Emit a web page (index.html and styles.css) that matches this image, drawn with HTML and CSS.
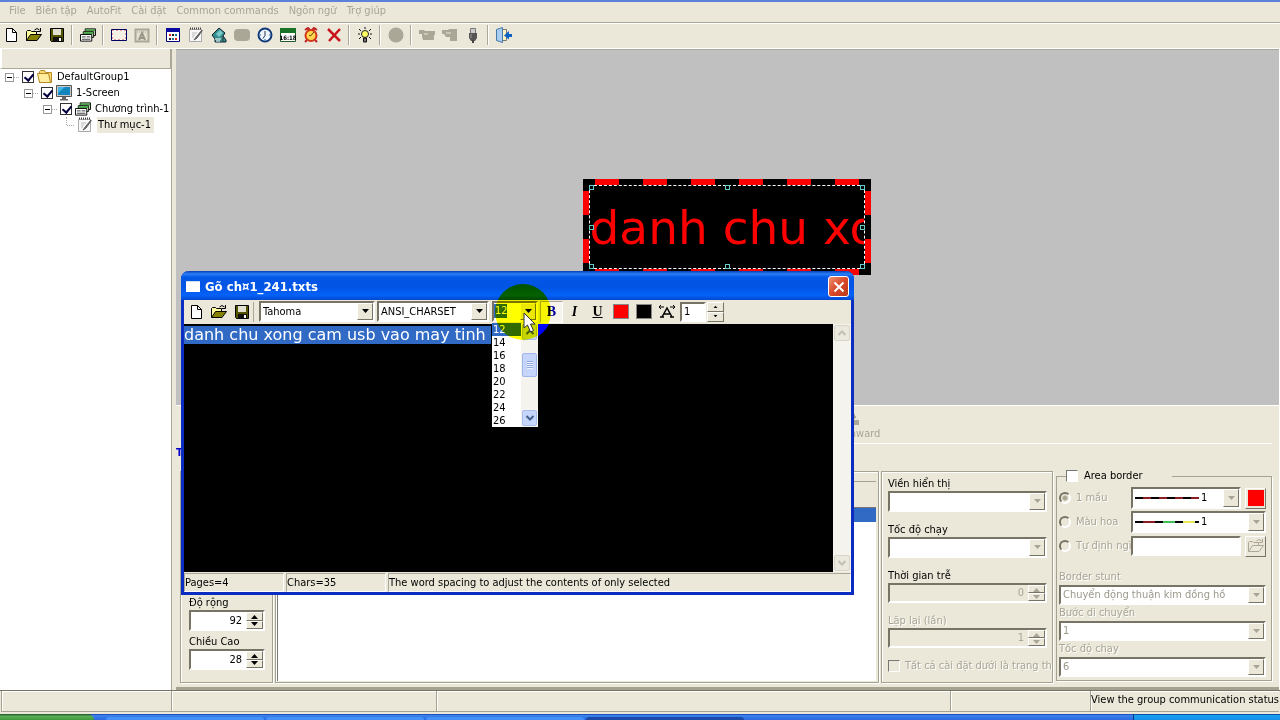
FILE: index.html
```html
<!DOCTYPE html>
<html lang="vi">
<head>
  <meta charset="UTF-8" />
  <meta name="viewport" content="width=device-width, initial-scale=1.0" />
  <title>LED Screen Editor</title>
  <link rel="stylesheet" href="styles.css">
</head>
<body>
  <!-- shared icons -->
  <svg width="0" height="0" class="sprite" aria-hidden="true">
    <symbol id="i-new" viewBox="0 0 16 16"><path d="M3.500 1.500h6l4 4v9h-10z" fill="#fff" stroke="#000"/><path d="M9.500 1.500v4h4" fill="none" stroke="#000"/></symbol>
    <symbol id="i-open" viewBox="0 0 16 16"><path d="M.5 13.500v-9l1-1h3l1 1h5v3" fill="#ffff9c" stroke="#000"/><path d="M.5 13.500l4-6h11l-4.500 6z" fill="#848200" stroke="#000"/><path d="M8.500 3q2.500-3 5 0M14.500 1v3.500h-3.500" fill="none" stroke="#000"/></symbol>
    <symbol id="i-save" viewBox="0 0 16 16"><path d="M1.500 1.500h13v13h-12l-1-1z" fill="#555500" stroke="#000"/><path d="M4 2h8v6H4z" fill="#e4e0d0"/><path d="M4 10h9v4.500H4z" fill="#111"/><path d="M10 11h2v3h-2z" fill="#fff"/></symbol>
    <symbol id="i-layers" viewBox="0 0 17 16"><path d="M5.500 1.500h11v7h-11z" fill="#d8f0c8" stroke="#000"/><path d="M6 2h10v2H6z" fill="#42a142"/><path d="M3.500 4.500h11v6h-11z" fill="#d8f0c8" stroke="#000"/><path d="M4 5h10v2H4z" fill="#42a142"/><path d="M.5 7.500h12v7H.5z" fill="#fff" stroke="#000"/><path d="M2 10h4M7 10h4M2 12.500h9" stroke="#333"/></symbol>
    <symbol id="i-note" viewBox="0 0 16 16"><path d="M1.500 2.500h12v12h-12z" fill="#f8f8f8" stroke="#aaa"/><path d="M2 1.500h11" stroke="#444" stroke-width="2" stroke-dasharray="1 1"/><path d="M4 6h5M4 8h3M4 10h2" stroke="#bbb"/><path d="M14 3L9 9l-3 4 3-2 5-7z" fill="#888" stroke="#555"/></symbol>
    <symbol id="i-folder" viewBox="0 0 16 16"><path d="M2.500 4.500v-2l1-1h4l1 2h6v10h-12z" fill="#f5d878" stroke="#b58a20"/><path d="M.5 4.500h11l2 9h-11z" fill="#ffec9e" stroke="#b58a20"/></symbol>
    <symbol id="i-screen" viewBox="0 0 16 16"><path d="M.5.500h15v11H.5z" fill="#c8c8c8" stroke="#555"/><path d="M2 2h12v8H2z" fill="#1285bd"/><path d="M2 2h7L2 8z" fill="#42b5e4"/><path d="M6 12h4v2h2v1.500H4V14h2z" fill="#666"/></symbol>
    <symbol id="i-down" viewBox="0 0 9 5"><path d="M1 0h7L4.500 4z" fill="currentColor"/></symbol>
    <symbol id="i-up" viewBox="0 0 9 5"><path d="M1 5h7L4.500 1z" fill="currentColor"/></symbol>
    <symbol id="i-chev-up" viewBox="0 0 10 8"><path d="M1.500 6L5 2.500 8.500 6" fill="none" stroke="currentColor" stroke-width="2"/></symbol>
    <symbol id="i-chev-down" viewBox="0 0 10 8"><path d="M1.500 2L5 5.500 8.500 2" fill="none" stroke="currentColor" stroke-width="2"/></symbol>
  </svg>

  <div class="app">
    <nav class="menubar">
      <a href="#">File</a><a href="#">Biên tập</a><a href="#">AutoFit</a><a href="#">Cài đặt</a><a href="#">Common commands</a><a href="#">Ngôn ngữ</a><a href="#">Trợ giúp</a>
    </nav>

    <div class="toolbar">
      <button aria-label="New"><svg><use href="#i-new"/></svg></button>
      <button aria-label="Open"><svg><use href="#i-open"/></svg></button>
      <button aria-label="Save"><svg><use href="#i-save"/></svg></button>
      <i class="sep"></i>
      <button aria-label="Program"><svg><use href="#i-layers"/></svg></button>
      <i class="sep"></i>
      <button aria-label="Area"><svg viewBox="0 0 16 16"><path d="M.5 2.500h15v11H.5z" fill="#f4f0e4" stroke="#000060"/><path d="M1.500 3.500h13v9h-13z" fill="none" stroke="#fff"/><path d="M1.500 3.500h13v9h-13z" fill="none" stroke="#c33" stroke-dasharray="1 3"/></svg></button>
      <button aria-label="Text"><svg viewBox="0 0 16 16"><path d="M1.500 2.500h13v12h-13z" fill="#e4e0d0" stroke="#aaa797" stroke-width="2"/><path d="M1 5h14" stroke="#aaa797" stroke-dasharray="1 1"/><path d="M5 13l3-7 3 7M6 11h4" fill="none" stroke="#999688" stroke-width="2"/></svg></button>
      <i class="sep"></i>
      <button aria-label="Table"><svg viewBox="0 0 16 16"><path d="M1.500 1.500h13v13h-13z" fill="#fff" stroke="#000080"/><path d="M1 1h14v4H1z" fill="#0a0aa0"/><path d="M4 7h2v2H4zM10 11h2v2h-2z" fill="#d22"/><path d="M7 7h2v2H7zM4 11h2v2H4z" fill="#222"/><path d="M10 7h2v2h-2zM7 11h2v2H7z" fill="#27a"/></svg></button>
      <button aria-label="Edit"><svg><use href="#i-note"/></svg></button>
      <button aria-label="Paint"><svg viewBox="0 0 16 16"><path d="M1 8l7-7 6 5-2 3 3 4v2H4v-3z" fill="#368d8d" stroke="#123"/><path d="M5 7l4-4 3 3-4 4z" fill="#79c9c7"/><path d="M4 12h6M5 14h4" stroke="#fff"/><path d="M12 9v5" stroke="#333"/></svg></button>
      <button aria-label="Record"><svg viewBox="0 0 16 16"><rect y="2" width="16" height="12" rx="4" fill="#aaa797"/></svg></button>
      <button aria-label="Clock"><svg viewBox="0 0 16 16"><circle cx="8" cy="8" r="6.500" fill="#eef6ff" stroke="#103a78" stroke-width="2"/><path d="M8 4v4.500l-2 3" fill="none" stroke="#234"/><path d="M3 8h1M12 8h1M8 12v1" stroke="#268"/></svg></button>
      <button aria-label="Time"><svg viewBox="0 0 16 16"><path d="M.5 1.500h15v13H.5z" fill="#fff" stroke="#1d5a26"/><path d="M0 1h16v5H0z" fill="#197325"/><text x="8" y="13" text-anchor="middle" class="clock-text">16:18</text></svg></button>
      <button aria-label="Alarm"><svg viewBox="0 0 16 16"><path d="M2 3l3-2 2 2M14 3l-3-2-2 2M4 13l-2 2M12 13l2 2" stroke="#b22" stroke-width="2" fill="#e52"/><circle cx="8" cy="8.500" r="5.500" fill="#ffd84c" stroke="#d2361c" stroke-width="2"/><path d="M11 5L7.500 9 6 8" fill="none" stroke="#631"/></svg></button>
      <button aria-label="Delete"><svg viewBox="0 0 16 16"><path d="M2 2l12 12M14 2L3 14" stroke="#c8141a" stroke-width="2.500"/></svg></button>
      <i class="sep"></i>
      <button aria-label="Light"><svg viewBox="0 0 16 16"><circle cx="8" cy="7" r="3.500" fill="#ffff62" stroke="#222"/><path d="M6.500 11h3v4h-3z" fill="#777" stroke="#111"/><path d="M8 0v2M1 7h2M13 7h2M2 2l2 2M14 2l-2 2M2 12l2-2M14 12l-2-2" stroke="#111"/></svg></button>
      <i class="sep"></i>
      <button aria-label="Stop"><svg viewBox="0 0 16 16"><circle cx="8" cy="8" r="7.500" fill="#aaa797"/></svg></button>
      <i class="sep"></i>
      <button aria-label="Send"><svg viewBox="0 0 16 16"><path d="M0 3h5l1 1h10v4h-1v5H4l-1-3V7H0z" fill="#aaa797"/><path d="M5 7h4" stroke="#e9e5d6"/></svg></button>
      <button aria-label="Receive"><svg viewBox="0 0 16 16"><path d="M0 3h6l1-1h8v12H8v-4H4L2 7H0z" fill="#aaa797"/><path d="M4 6h5" stroke="#e9e5d6"/></svg></button>
      <button aria-label="USB"><svg viewBox="0 0 16 16"><path d="M5.500 1.500h5v5h-5z" fill="#ccc" stroke="#777"/><path d="M4 6h8v5l-2 3H6l-2-3z" fill="#555"/><path d="M6 7v4" stroke="#999"/><path d="M8 13v3" stroke="#444" stroke-width="2"/></svg></button>
      <i class="sep"></i>
      <button aria-label="Exit"><svg viewBox="0 0 16 16"><path d="M5.500 2.500h5v11h-5z" fill="#fff3c0" stroke="#777"/><path d="M.5 2.500l6-2v15l-6-2z" fill="#a9cdf0" stroke="#4779aa"/><path d="M16 7h-3V4L8 8.500l5 4V10h3z" fill="#0c61c4"/></svg></button>
    </div>

    <div class="workspace">
      <aside class="side">
        <div class="side-head"></div>
        <ul class="tree">
          <li class="level-1"><i class="node"></i><input type="checkbox" id="t1" checked><svg><use href="#i-folder"/></svg><label for="t1">DefaultGroup1</label></li>
          <li class="level-2"><i class="node"></i><input type="checkbox" id="t2" checked><svg><use href="#i-screen"/></svg><label for="t2">1-Screen</label></li>
          <li class="level-3"><i class="node"></i><input type="checkbox" id="t3" checked><svg><use href="#i-layers"/></svg><label for="t3">Chương trình-1</label></li>
          <li class="level-4"><i class="elbow"></i><svg><use href="#i-note"/></svg><span class="current">Thư mục-1</span></li>
        </ul>
      </aside>

      <main class="main">
        <div class="canvas">
          <div class="led">
            <div class="led-area">
              <div class="led-text">danh chu xo</div>
              <i class="grip nw"></i><i class="grip n"></i><i class="grip ne"></i>
              <i class="grip w"></i><i class="grip e"></i>
              <i class="grip sw"></i><i class="grip s"></i><i class="grip se"></i>
            </div>
          </div>
        </div>

        <section class="props">
          <div class="props-bar">
            <button class="move-btn" disabled><svg viewBox="0 0 12 12"><path d="M1 6h10v5H1z" fill="#aaa797"/><path d="M6 0v5M4 3h4" stroke="#aaa797" stroke-width="2"/></svg>Downward</button>
          </div>
          <h2 class="props-title">T</h2>
          <div class="groups">
            <div class="group size-group">
              <label for="w">Độ rộng</label>
              <div class="spin"><input id="w" type="text" value="92"><span class="spin-btns"><button aria-label="Up"><svg><use href="#i-up"/></svg></button><button aria-label="Down"><svg><use href="#i-down"/></svg></button></span></div>
              <label for="h">Chiều Cao</label>
              <div class="spin"><input id="h" type="text" value="28"><span class="spin-btns"><button aria-label="Up"><svg><use href="#i-up"/></svg></button><button aria-label="Down"><svg><use href="#i-down"/></svg></button></span></div>
            </div>

            <div class="group list-group">
              <div class="list">
                <div class="list-head"></div>
                <div class="list-row"></div>
              </div>
            </div>

            <div class="group effect-group">
              <label for="fx">Viền hiển thị</label>
              <div class="combo off"><select id="fx" disabled><option></option></select><span class="arrow"><svg><use href="#i-down"/></svg></span></div>
              <label for="speed">Tốc độ chạy</label>
              <div class="combo off"><select id="speed" disabled><option></option></select><span class="arrow"><svg><use href="#i-down"/></svg></span></div>
              <label for="delay">Thời gian trễ</label>
              <div class="spin off"><input id="delay" type="text" value="0" disabled><span class="spin-btns"><button aria-label="Up" disabled><svg><use href="#i-up"/></svg></button><button aria-label="Down" disabled><svg><use href="#i-down"/></svg></button></span></div>
              <label for="repeat" class="dim">Lặp lại (lần)</label>
              <div class="spin off"><input id="repeat" type="text" value="1" disabled><span class="spin-btns"><button aria-label="Up" disabled><svg><use href="#i-up"/></svg></button><button aria-label="Down" disabled><svg><use href="#i-down"/></svg></button></span></div>
              <div class="check-row"><input type="checkbox" id="all" disabled><label for="all" class="dim">Tất cả cài đặt dưới là trạng thá</label></div>
            </div>

            <fieldset class="border-group">
              <legend><input type="checkbox" id="ab"><label for="ab">Area border</label></legend>
              <div class="radio-row">
                <input type="radio" name="b" id="b1" checked disabled><label for="b1" class="dim">1 mầu</label>
                <div class="combo off sample"><svg class="line" viewBox="0 0 64 2"><path d="M0 1h64" stroke="#000" stroke-width="2"/><path d="M8 1h56" stroke="#8e1c22" stroke-width="2" stroke-dasharray="8 8"/></svg><select aria-label="Line" disabled><option>1</option></select><span class="arrow"><svg><use href="#i-down"/></svg></span></div>
                <button class="swatch-btn" aria-label="Colour"><i></i></button>
              </div>
              <div class="radio-row">
                <input type="radio" name="b" id="b2" disabled><label for="b2" class="dim">Màu hoa</label>
                <div class="combo off sample"><svg class="line" viewBox="0 0 64 2"><path d="M0 1h64" stroke="#000" stroke-width="2"/><path d="M8 1h12" stroke="#8e1c22" stroke-width="2"/><path d="M28 1h12" stroke="#3fc050" stroke-width="2"/><path d="M48 1h12" stroke="#e8e850" stroke-width="2"/></svg><select aria-label="Pattern" disabled><option>1</option></select><span class="arrow"><svg><use href="#i-down"/></svg></span></div>
              </div>
              <div class="radio-row">
                <input type="radio" name="b" id="b3" disabled><label for="b3" class="dim">Tự định ngĩ</label>
                <input type="text" class="path" aria-label="File" disabled>
                <button class="swatch-btn" aria-label="Browse" disabled><svg viewBox="0 0 16 16"><path d="M.5 13.500v-9l1-1h3l1 1h5v3M.5 13.500l4-6h11l-4.500 6zM8.500 3q2.500-3 5 0M14.500 1v3.500h-3.500" fill="none" stroke="#aaa797"/></svg></button>
              </div>
              <div class="stack">
                <label for="stunt" class="dim">Border stunt</label>
                <div class="combo off"><select id="stunt" disabled><option>Chuyển động thuận kim đồng hồ</option></select><span class="arrow"><svg><use href="#i-down"/></svg></span></div>
                <label for="step" class="dim">Bước di chuyển</label>
                <div class="combo off"><select id="step" disabled><option>1</option></select><span class="arrow"><svg><use href="#i-down"/></svg></span></div>
                <label for="bspeed" class="dim">Tốc độ chạy</label>
                <div class="combo off"><select id="bspeed" disabled><option>6</option></select><span class="arrow"><svg><use href="#i-down"/></svg></span></div>
              </div>
            </fieldset>
          </div>
        </section>
      </main>
    </div>

    <footer class="statusbar">
      <span class="s1"></span><span class="s2"></span><span class="s3"></span><span class="s4"></span><span class="s5">View the group communication status</span>
    </footer>
    <div class="taskbar"><i class="start"></i><i class="task"></i><i class="task"></i><i class="task"></i><i class="task active"></i><i class="tray"></i></div>
  </div>

  <!-- text editor window -->
  <div class="window">
    <div class="titlebar">
      <i class="win-icon"></i><span>Gõ ch¤1_241.txts</span>
      <button class="close" aria-label="Close"><svg viewBox="0 0 12 12"><path d="M1.500 1.500l9 9M10.500 1.500l-9 9" stroke="#fff" stroke-width="2"/></svg></button>
    </div>
    <div class="win-tools">
      <button aria-label="New"><svg><use href="#i-new"/></svg></button>
      <button aria-label="Open"><svg><use href="#i-open"/></svg></button>
      <button aria-label="Save"><svg><use href="#i-save"/></svg></button>
      <i class="win-sep"></i>
      <div class="combo font-combo"><select aria-label="Font"><option>Tahoma</option></select><span class="arrow"><svg><use href="#i-down"/></svg></span></div>
      <div class="combo charset-combo"><select aria-label="Charset"><option>ANSI_CHARSET</option></select><span class="arrow"><svg><use href="#i-down"/></svg></span></div>
      <div class="size-box">
        <div class="combo size-combo"><input type="text" aria-label="Size" value="12"><span class="arrow"><svg><use href="#i-down"/></svg></span></div>
        <div class="size-list">
          <ul><li class="picked">12</li><li>14</li><li>16</li><li>18</li><li>20</li><li>22</li><li>24</li><li>26</li></ul>
          <div class="scroll blue">
            <button aria-label="Up"><svg><use href="#i-chev-up"/></svg></button>
            <i class="thumb"></i>
            <button aria-label="Down"><svg><use href="#i-chev-down"/></svg></button>
          </div>
        </div>
        <i class="halo"></i><i class="halo-edge"></i>
        <svg class="cursor" viewBox="0 0 13 21"><path d="M1 1v15l3.500-3 3 7 3-1.500-3-6.500h4.500z" fill="#fff" stroke="#333"/></svg>
      </div>
      <button class="fmt bold on">B</button>
      <button class="fmt italic">I</button>
      <button class="fmt under">U</button>
      <button aria-label="Text colour"><i class="chip red"></i></button>
      <button aria-label="Back colour"><i class="chip black"></i></button>
      <button aria-label="Spacing"><svg viewBox="0 0 16 16"><path d="M3 13l5-9 5 9M5 10h6M1 13h4M11 13h4" fill="none" stroke="#000" stroke-width="1.500"/><path d="M0 3h5M2 1L0 3l2 2M11 3h5M14 1l2 2-2 2" fill="none" stroke="#000"/></svg></button>
      <div class="gap-spin"><input type="text" aria-label="Spacing value" value="1"><span><button aria-label="Up"><svg><use href="#i-up"/></svg></button><button aria-label="Down"><svg><use href="#i-down"/></svg></button></span></div>
    </div>
    <div class="editor">
      <div class="page"><span class="selected">danh chu xong cam usb vao may tinh </span></div>
      <div class="scroll">
        <button aria-label="Up"><svg><use href="#i-chev-up"/></svg></button>
        <button aria-label="Down"><svg><use href="#i-chev-down"/></svg></button>
      </div>
    </div>
    <div class="win-status"><span class="w1">Pages=4</span><span class="w1">Chars=35</span><span class="w2">The word spacing to adjust the contents of only selected</span></div>
  </div>
</body>
</html>
```
FILE: styles.css
```css
* { box-sizing: border-box; margin: 0; padding: 0; }
body { font-family: "DejaVu Sans Condensed", "DejaVu Sans", sans-serif; font-size: 11px; line-height: 16px; color: #000; background: #ebe7d9; overflow: hidden; }
button, input, select { font: inherit; color: inherit; border: none; border-radius: 0; background: none; outline: none; }
a { color: inherit; text-decoration: none; }
ul { list-style: none; }
i { display: block; flex: none; }
svg { display: block; flex: none; width: 16px; height: 16px; }
.sprite { position: absolute; width: 0; height: 0; }

.app { display: flex; flex-direction: column; height: 100vh; }

/* menu and main toolbar */
.menubar { display: flex; gap: 10px; height: 23px; padding: 1px 9px; border-top: 2px solid #5f7fdc; border-bottom: 1px solid #aca899; color: #a8a596; }
.toolbar { display: flex; align-items: center; height: 26px; padding-bottom: 2px; border-top: 1px solid #fff; border-bottom: 1px solid #fff; }
.toolbar button, .win-tools > button { display: flex; align-items: center; justify-content: center; flex: none; width: 23px; height: 22px; }
.toolbar button { padding-right: 1px; }
.sep { width: 8px; height: 20px; background: linear-gradient(90deg, transparent 2px, #aca899 2px, #aca899 3px, #fff 3px, #fff 4px, transparent 4px); }
.clock-text { font-size: 6px; font-weight: bold; }

/* tree */
.workspace { display: flex; flex: 1; min-height: 0; }
.side { display: flex; flex-direction: column; flex: none; width: 172px; background: #fff; border-right: 1px solid #aca899; }
.side-head { height: 20px; background: #ebe7da; border-left: 2px solid #fff; border-bottom: 1px solid #aca899; border-right: 1px solid #aca899; }
.tree li { display: flex; align-items: center; height: 16px; white-space: nowrap; }
.tree .level-1 { padding-left: 5px; }
.tree .level-2 { padding-left: 24px; }
.tree .level-3 { padding-left: 43px; }
.tree .level-4 { padding-left: 66px; }
.tree svg { margin: 0 4px 0 3px; }
.node { width: 17px; height: 9px; background: linear-gradient(#000, #000) 2px 4px / 5px 1px no-repeat, linear-gradient(90deg, transparent 9px, #aaa 9px, #aaa 10px, transparent 10px, transparent 11px, #aaa 11px, #aaa 12px, transparent 12px, transparent 13px, #aaa 13px, #aaa 14px, transparent 14px) 0 4px / 17px 1px no-repeat; position: relative; }
.node::before { content: ""; position: absolute; inset: 0 8px 0 0; border: 1px solid #999; }
.elbow { width: 8px; height: 16px; border-left: 1px dotted #aaa; background: linear-gradient(90deg, #aaa 50%, transparent 50%) 0 8px / 2px 1px repeat-x; clip-path: inset(0 0 7px 0); }
.current { background: #ece8dc; padding: 0 3px 0 1px; }
input[type="checkbox"] { appearance: none; flex: none; width: 12px; height: 12px; background: #fff; border: 1px solid #fff; border-top-color: #777; border-left-color: #777; }
.tree input[type="checkbox"] { border: 1px solid #333; position: relative; }
.tree input:checked::after { content: ""; position: absolute; left: 3px; top: 0; width: 4px; height: 7px; border: solid #000040; border-width: 0 2px 2px 0; transform: rotate(40deg); }

/* preview */
.main { display: flex; flex-direction: column; flex: 1; min-width: 0; border-left: 4px solid #ebe7d9; border-right: 1px solid #fff; }
.canvas { display: flex; flex: 1; align-items: center; justify-content: center; padding: 0 2px 2px 0; background: #c0c0c0; border-top: 1px solid #aca899; }
.led { width: 288px; height: 96px; padding: 6px; background:
  repeating-linear-gradient(90deg, #f00 0 24px, #000 24px 48px) 12px 0 / 276px 6px no-repeat,
  repeating-linear-gradient(90deg, #f00 0 24px, #000 24px 48px) 12px 90px / 276px 6px no-repeat,
  repeating-linear-gradient(#f00 0 24px, #000 24px 48px) 0 12px / 6px 84px no-repeat,
  repeating-linear-gradient(#f00 0 24px, #000 24px 48px) 282px 12px / 6px 84px no-repeat, #000; }
.led-area { position: relative; height: 84px; border: 1px dashed #fff; background: #000; }
.led-text { height: 82px; overflow: hidden; white-space: nowrap; font-family: "DejaVu Sans", sans-serif; font-size: 47px; line-height: 84px; color: #f00; }
.grip { position: absolute; width: 5px; height: 5px; border: 1px solid #6cc; background: #000; }
.nw, .n, .ne { top: -1px; }
.w, .e { top: 39px; }
.sw, .s, .se { bottom: -1px; }
.nw, .w, .sw { left: -1px; }
.n, .s { left: 135px; }
.ne, .e, .se { right: -1px; }

/* properties */
.props { flex: none; padding: 0 7px 4px 4px; border-top: 1px solid #fff; border-bottom: 3px solid #a5a28f; }
.props-bar { height: 38px; border-bottom: 1px solid #fff; }
.move-btn { display: flex; flex-direction: column; align-items: center; margin-left: 648px; padding-top: 8px; color: #a8a596; }
.move-btn svg { width: 12px; height: 12px; }
.props-title { height: 27px; margin-left: -4px; line-height: 18px; font-size: 11px; color: #00c; }
.groups { display: flex; gap: 2px; height: 212px; }
.group, .border-group { border: 1px solid #a5a28f; box-shadow: 1px 1px 0 #fff, inset 1px 1px 0 #fff; min-width: 0; }
.size-group { display: flex; flex-direction: column; justify-content: flex-end; flex: none; width: 93px; padding: 0 7px 12px 8px; }
.group > label { line-height: 15px; }
.size-group .spin + label { margin-top: 3px; }
.list-group { flex: 1; padding: 9px 2px 0 1px; }
.list { height: 200px; background: #fff; border-left: 1px solid #777; border-top: 1px solid #a5a28f; }
.list-head { height: 26px; background: #ebe7d9; border-bottom: 1px solid #777; }
.list-row { height: 14px; background: #316ac5; }
.effect-group { display: flex; flex-direction: column; flex: none; width: 172px; padding: 4px 5px 0 6px; overflow: hidden; white-space: nowrap; }
.effect-group > div { margin-bottom: 10px; }
.check-row { display: flex; align-items: center; gap: 5px; }
.effect-group input[type="checkbox"] { background: #ebe7d9; }
.border-group { flex: none; width: 216px; height: 212px; margin: -2px 0 0 1px; padding: 4px 5px 0 2px; box-shadow: 1px 1px 0 #fff; }
.border-group legend { display: flex; align-items: center; gap: 6px; width: 106px; height: 14px; margin-left: 7px; }
.radio-row { display: flex; align-items: center; height: 22px; margin-bottom: 2px; }
.radio-row label { flex: none; width: 55px; margin-left: 5px; white-space: nowrap; }
.radio-row .path { flex: 1; min-width: 0; height: 20px; background: #fff; border: 2px solid; border-color: #777466 #fff #fff #777466; }
input[type="radio"] { appearance: none; flex: none; width: 12px; height: 12px; border-radius: 50%; border: 2px solid; border-color: #777466 #fff #fff #777466; }
input[type="radio"]:checked { background: radial-gradient(circle, #aaa797 2px, transparent 3px); }
.swatch-btn { display: flex; align-items: center; justify-content: center; flex: none; width: 21px; height: 21px; margin-left: 4px; border: 1px solid; border-color: #fff #777466 #777466 #fff; }
.swatch-btn i { width: 16px; height: 16px; background: #f00; }
.stack { padding-top: 10px; }
.stack .combo { height: 20px; }
.dim { color: #a8a596; text-shadow: 1px 1px 0 #fff; }

/* combo boxes and spinners */
.combo, .spin { display: flex; height: 21px; background: #fff; border: 2px solid; border-color: #777466 #fff #fff #777466; }
.combo { flex: none; }
.combo select, .combo input { appearance: none; flex: 1; min-width: 0; padding-left: 2px; opacity: 1; }
.combo.off select { color: #9c998a; }
.arrow { display: flex; align-items: center; justify-content: center; flex: none; width: 16px; background: #ebe7d9; border: 1px solid; border-color: #fff #777466 #777466 #fff; }
.arrow svg, .spin-btns svg { width: 9px; height: 5px; }
.off .arrow, .off .spin-btns { color: #a8a596; }
.combo.sample { flex: 1; align-items: center; height: 22px; }
.sample .arrow { align-self: stretch; }
.sample .line { width: 64px; height: 2px; margin-left: 2px; }
.combo.sample select { color: #000; }
.spin input { flex: 1; min-width: 0; text-align: right; padding-right: 4px; }
.spin-btns { display: flex; flex-direction: column; flex: none; width: 17px; background: #ebe7d9; }
.spin-btns button { display: flex; flex: 1; align-items: center; justify-content: center; border: 1px solid; border-color: #fff #777466 #777466 #fff; }
.spin.off { background: #ebe7d9; }
.spin.off input { color: #a8a596; }

/* status and task bars */
.statusbar { display: flex; flex: none; height: 24px; padding: 0 1px 2px; border-top: 1px solid #777466; white-space: nowrap; }
.statusbar span { border-left: 1px solid #a5a28f; border-bottom: 1px solid #a5a28f; box-shadow: inset 1px 1px 0 #fff; padding-top: 1px; }
.s1 { width: 170px; }
.s2 { width: 265px; }
.s3 { flex: 1; }
.s4 { width: 140px; }
.s5 { flex: none; }
.taskbar { display: flex; flex: none; height: 6px; background: linear-gradient(#1d50b8 0 1px, #3c84ee 1px, #2a6ae0); }
.start { width: 94px; margin-right: 12px; background: linear-gradient(#2a6a30 0 1px, #5fae5c 2px, #3c9838); border-radius: 0 6px 0 0; }
.task { width: 158px; margin: 3px 2px 0 0; background: #4490f6; border-radius: 3px 3px 0 0; }
.task.active { background: #1b4aa8; }
.tray { width: 147px; margin-left: auto; background: linear-gradient(#0d50a8 0 1px, #18a0f0 1px, #1490e8); border-left: 1px solid #0a3a80; }

/* editor window */
.window { position: absolute; left: 181px; top: 271px; width: 673px; display: flex; flex-direction: column; background: #ebe7d9; border: solid #0a2cc0; border-width: 0 3px 3px; border-radius: 8px 8px 0 0; }
.titlebar { display: flex; align-items: center; gap: 5px; height: 29px; margin: 0 -3px; padding: 2px 5px 0; border-radius: 8px 8px 0 0; background: linear-gradient(#0a3cb4, #2a80fa 3px, #0458e6 6px, #0254e4 16px, #0462fa 24px, #0348cc); color: #fff; font-weight: bold; font-size: 13px; }
.win-icon { width: 14px; height: 11px; background: #fff; border-top: 1px solid #cde; }
.close { display: flex; align-items: center; justify-content: center; width: 21px; height: 21px; margin-left: auto; border: 1px solid #fff; border-radius: 3px; background: linear-gradient(135deg, #ee9377, #d8492a 50%, #b93a18); }
.close svg { width: 12px; height: 12px; }
.win-tools { display: flex; align-items: center; height: 24px; padding-bottom: 1px; }
.win-sep { width: 6px; height: 20px; border-left: 1px solid #aca899; }
.font-combo { width: 116px; margin-right: 2px; }
.charset-combo { width: 112px; margin-right: 3px; }
.size-box { position: relative; margin-right: 2px; }
.size-combo { width: 46px; }
.size-combo input { width: 20px; flex: none; margin: 1px 0; padding-left: 1px; height: 14px; background: linear-gradient(90deg, #316ac5 13px, transparent 13px); color: #fff; }
.size-combo .arrow { margin-left: auto; }
.size-list { position: absolute; left: 0; top: 22px; z-index: 1; display: flex; width: 46px; height: 104px; background: #fff; }
.size-list ul { flex: 1; }
.size-list li { height: 13px; line-height: 13px; padding-left: 1px; }
.picked { background: #316ac5; color: #fff; }
.scroll { display: flex; flex-direction: column; justify-content: space-between; flex: none; width: 18px; padding: 1px; background: #f4f3ee; }
.scroll button { display: flex; align-items: center; justify-content: center; height: 16px; border: 1px solid #d8d5c8; border-radius: 2px; background: #ebe9df; color: #c3c1b4; }
.scroll button svg { width: 10px; height: 8px; }
.scroll.blue { width: 17px; }
.blue button { border-color: #a9bdec; background: #c6d5fb; color: #44608f; }
.thumb { height: 24px; margin-bottom: 20px; border: 1px solid #a0b5ea; border-radius: 2px; background: repeating-linear-gradient(#90a8e4 0 1px, #eef3ff 1px 2px) 4px 7px / 6px 8px no-repeat, #c6d5fb; }
.halo { position: absolute; left: 3px; top: -17px; z-index: 2; width: 56px; height: 56px; border-radius: 50%; background: #ff0; mix-blend-mode: multiply; pointer-events: none; }
.halo-edge { position: absolute; left: 46px; top: 23px; z-index: 3; width: 14px; height: 17px; background: radial-gradient(circle at -15px -12px, #00f 28px, transparent 29px); }
.cursor { position: absolute; left: 31px; top: 11px; z-index: 4; width: 13px; height: 21px; }
.win-tools .fmt { font-family: "Liberation Serif", serif; font-size: 14px; font-weight: bold; }
.win-tools .on { color: #009; background: #f6f4ec; border: 1px solid; border-color: #aaa797 #fff #fff #aaa797; }
.italic { font-style: italic; }
.under { text-decoration: underline; }
.chip { width: 16px; height: 15px; border: 1px solid #888; }
.red { background: #f00; }
.black { background: #000; }
.gap-spin { display: flex; align-items: center; gap: 1px; margin-left: 2px; }
.gap-spin input { width: 26px; height: 20px; padding-left: 2px; background: #fff; border: 2px solid; border-color: #777466 #fff #fff #777466; }
.gap-spin button { display: flex; align-items: center; justify-content: center; width: 17px; height: 10px; border: 1px solid; border-color: #fff #777466 #777466 #fff; }
.gap-spin svg { width: 5px; height: 3px; }
.editor { display: flex; height: 248px; background: #000; }
.page { flex: 1; padding-top: 2px; }
.selected { display: inline-block; height: 18px; line-height: 18px; font-family: "DejaVu Sans", sans-serif; font-size: 16px; color: #fff; background: #316ac5; white-space: pre; }
.win-status { display: flex; gap: 2px; height: 20px; padding-top: 1px; }
.win-status span { border: 1px solid; border-color: #aca899 #fff #fff #aca899; line-height: 18px; }
.w1 { width: 100px; }
.w2 { flex: 1; }
```
